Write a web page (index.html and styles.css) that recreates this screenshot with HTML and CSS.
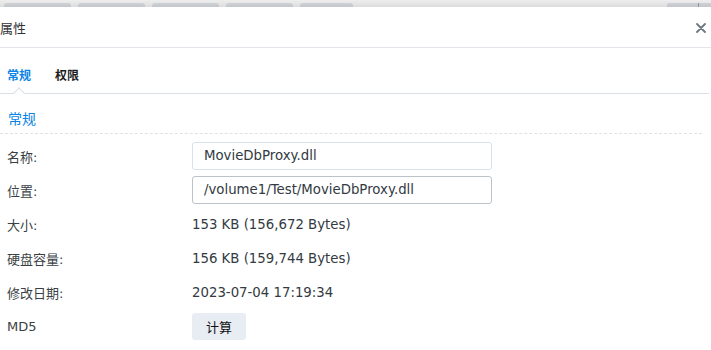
FILE: index.html
```html
<!DOCTYPE html>
<html lang="zh">
<head>
<meta charset="utf-8">
<link rel="stylesheet" href="styles.css">
</head>
<body>
<div class="taskbar">
  <span class="ttab"></span><span class="ttab"></span><span class="ttab"></span><span class="ttab"></span><span class="ttab short"></span>
  <span class="spacer"></span>
  <span class="ttab right"><i class="sep"></i></span>
</div>
<div class="dialog">
  <div class="header">
    <span class="title">属性</span>
    <svg class="close" width="10" height="10" viewBox="0 0 10 10"><path d="M1 1 L9 9 M9 1 L1 9" stroke="#6f7882" stroke-width="1.8" stroke-linecap="round"/></svg>
  </div>
  <div class="tabs">
    <span class="tab active">常规<i class="notch"></i></span>
    <span class="tab">权限</span>
  </div>
  <div class="section">常规</div>
  <div class="rows">
    <div class="row"><span class="label">名称:</span><div class="input">MovieDbProxy.dll</div></div>
    <div class="row"><span class="label">位置:</span><div class="input dark">/volume1/Test/MovieDbProxy.dll</div></div>
    <div class="row"><span class="label">大小:</span><span class="value">153 KB (156,672 Bytes)</span></div>
    <div class="row"><span class="label">硬盘容量:</span><span class="value">156 KB (159,744 Bytes)</span></div>
    <div class="row"><span class="label">修改日期:</span><span class="value">2023-07-04 17:19:34</span></div>
    <div class="row"><span class="label">MD5</span><span class="btn">计算</span></div>
  </div>
</div>
</body>
</html>
```
FILE: styles.css
```css
html, body {
  margin: 0;
  padding: 0;
  width: 711px;
  height: 350px;
  overflow: hidden;
  background: #fff;
  font-family: "DejaVu Sans", "Noto Sans CJK SC", sans-serif;
  color: #333;
}
.taskbar {
  height: 7px;
  background: linear-gradient(#eeeeee, #dcdcdc);
  display: flex;
  align-items: flex-end;
  padding-left: 4px;
  gap: 7px;
  box-sizing: border-box;
}
.ttab {
  width: 67px;
  height: 4px;
  background: linear-gradient(#cfd2d5, #c3c6ca);
  border-radius: 3px 3px 0 0;
  position: relative;
}
.ttab.short { width: 53px; }
.spacer { flex: 1; }
.ttab.right { width: 44px; border-radius: 2px 0 0 0; }
.sep {
  position: absolute;
  left: 31px;
  top: 0;
  width: 1px;
  height: 4px;
  background: #8e949a;
}
.dialog {
  background: #fff;
}
.header {
  height: 40px;
  border-bottom: 1px solid #e3e7eb;
  display: flex;
  align-items: center;
  justify-content: space-between;
  padding: 0 5px 0 0;
}
.title {
  font-family: "Noto Sans CJK SC", sans-serif;
  font-size: 13px;
  color: #333;
  margin-left: 0;
  margin-top: 0;
}
.close { margin-top: 2px; }
.tabs {
  height: 46px;
  border-bottom: 1px solid #d9dfe5;
  margin-right: 2px;
  display: flex;
  align-items: center;
  gap: 24px;
  padding-left: 7px;
  box-sizing: border-box;
}
.tab {
  font-family: "Noto Sans CJK SC", sans-serif;
  font-size: 12px;
  font-weight: bold;
  color: #1d1d1d;
  position: relative;
  margin-top: 7px;
}
.tab.active { color: #0a84e6; }
.notch {
  position: absolute;
  left: 8px;
  top: 23px;
  width: 7px;
  height: 7px;
  background: #fff;
  border-left: 1px solid #d9dfe5;
  border-top: 1px solid #d9dfe5;
  transform: rotate(45deg);
}
.section {
  height: 40px;
  box-sizing: border-box;
  border-bottom: 1px dashed #dde2e7;
  margin-right: 9px;
  padding: 14px 0 0 8px;
  font-family: "Noto Sans CJK SC", sans-serif;
  font-size: 14px;
  color: #0a84e6;
  line-height: 20px;
}
.rows {
  padding: 8px 0 0 7px;
  display: flex;
  flex-direction: column;
  gap: 6px;
}
.row {
  height: 28px;
  display: flex;
  align-items: center;
}
.label {
  width: 185px;
  font-size: 13px;
  color: #3a3f45;
}
.value {
  font-size: 13.3px;
  color: #333a42;
}
.input {
  width: 300px;
  height: 28px;
  box-sizing: border-box;
  border: 1px solid #d8e2eb;
  border-radius: 3px;
  padding-left: 11px;
  font-size: 13.3px;
  line-height: 26px;
  color: #333a42;
}
.input.dark { border-color: #bcc2c9; }
.btn {
  width: 54px;
  height: 27px;
  background: #e8edf4;
  border-radius: 3px;
  font-family: "Noto Sans CJK SC", sans-serif;
  font-size: 13px;
  color: #111;
  display: flex;
  align-items: center;
  justify-content: center;
}
```
